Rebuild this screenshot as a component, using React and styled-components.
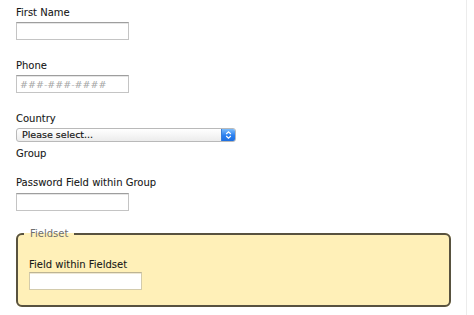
import React from "react";
import styled, { createGlobalStyle } from "styled-components";

const Global = createGlobalStyle`
  html, body { margin: 0; padding: 0; background: #fff; }
  body { font-family: "DejaVu Sans", "Liberation Sans", sans-serif; color: #222; }
  * { box-sizing: border-box; }
`;

const Page = styled.div`
  width: 467px;
  min-height: 315px;
  border-right: 1px solid #ececec;
  padding: 7px 0 0 16px;
`;

const Field = styled.div`
  margin-bottom: ${(p) => p.$gap ?? 20}px;
`;

const Label = styled.label`
  display: block;
  font-size: 10px;
  line-height: 12px;
  margin-bottom: ${(p) => p.$gap ?? 3}px;
  color: #161616;
  -webkit-text-stroke: 0.08px #161616;
`;

const GroupTitle = styled.div`
  font-size: 10px;
  line-height: 12px;
  color: #161616;
  -webkit-text-stroke: 0.08px #161616;
  margin-bottom: 17px;
`;

const TextInput = styled.input`
  display: block;
  width: ${(p) => p.$w ?? 113}px;
  height: 18px;
  margin: 0;
  padding: 0 3px;
  border: 1px solid ${(p) => (p.$tan ? "#d3cbac" : "#c4c4c4")};
  border-top-color: ${(p) => (p.$tan ? "#bdb494" : "#9e9e9e")};
  box-shadow: inset 0 1px 0 ${(p) => (p.$tan ? "#eee8d4" : "#e6e6e6")};
  background: #fff;
  font-family: "DejaVu Sans", sans-serif;
  font-size: 9.5px;
  outline: none;
  &::placeholder {
    color: #a4a4a4;
    font-style: italic;
  }
`;

const Select = styled.div`
  display: flex;
  width: 220px;
  height: 14px;
  border: 1px solid #b9b9b9;
  border-radius: 3px;
  background: linear-gradient(#ffffff, #ececec);
  margin-top: 1px;
  overflow: hidden;
`;

const SelectText = styled.span`
  flex: 1;
  font-size: 9.5px;
  line-height: 12px;
  padding-left: 5px;
  color: #111;
  -webkit-text-stroke: 0.15px #111;
`;

const Stepper = styled.span`
  width: 14px;
  display: flex;
  align-items: center;
  justify-content: center;
  background: linear-gradient(#7cbcfb, #2a7ff0 55%, #1e6fe0);
  border-left: 1px solid #3a7fd8;
`;

const Fieldset = styled.fieldset`
  width: 435px;
  margin: 17px 0 0 0;
  padding: 0 11px 15px 11px;
  border: 2px solid #58523f;
  border-radius: 6px;
  background: #fff0b8;
`;

const Legend = styled.legend`
  font-size: 10px;
  line-height: 12px;
  color: #6e6e6e;
  padding: 0 6px;
  margin-left: -5px;
`;

const InnerField = styled.div`
  margin-top: 19px;
`;

export default function App() {
  return (
    <>
      <Global />
      <Page>
        <Field>
          <Label>First Name</Label>
          <TextInput type="text" />
        </Field>
        <Field>
          <Label>Phone</Label>
          <TextInput type="text" placeholder="###-###-####" />
        </Field>
        <Field $gap={6}>
          <Label>Country</Label>
          <Select>
            <SelectText>Please select...</SelectText>
            <Stepper>
              <svg width="7" height="10" viewBox="0 0 7 10">
                <path d="M1.2 4 L3.5 1.8 L5.8 4" fill="none" stroke="#fff" strokeWidth="1.2" />
                <path d="M1.2 6 L3.5 8.2 L5.8 6" fill="none" stroke="#fff" strokeWidth="1.2" />
              </svg>
            </Stepper>
          </Select>
        </Field>
        <GroupTitle>Group</GroupTitle>
        <Field $gap={0}>
          <Label $gap={4}>Password Field within Group</Label>
          <TextInput type="password" />
        </Field>
        <Fieldset>
          <Legend>Fieldset</Legend>
          <InnerField>
            <Label $gap={1}>Field within Fieldset</Label>
            <TextInput type="text" $tan />
          </InnerField>
        </Fieldset>
      </Page>
    </>
  );
}
